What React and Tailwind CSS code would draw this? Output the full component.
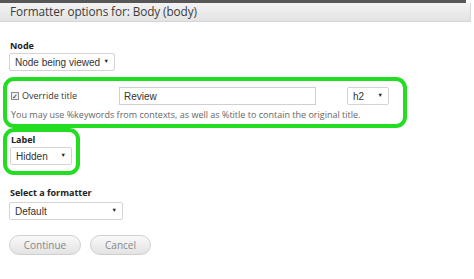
import React from "react";

const Caret = () => <span className="text-[5.5px] leading-none text-[#222]">▼</span>;

const FakeSelect = ({ value, className = "" }) => (
  <div
    className={`flex items-center justify-between h-[18px] pl-[5px] pr-[5px] bg-white border border-[#d4d4d4] rounded-[2px] text-[10px] text-[#333] whitespace-nowrap font-['Liberation_Sans',Arial,sans-serif] ${className}`}
  >
    <span>{value}</span>
    <Caret />
  </div>
);

const App = () => {
  return (
    <div className="w-[474px] h-[279px] bg-white overflow-hidden font-['Open_Sans',sans-serif] text-[#222] whitespace-nowrap">
      {/* Dialog header */}
      <div className="w-[466px] h-[3px] bg-[#575757]" />
      <div className="w-[471px] h-[19px] flex items-center pl-[10px] bg-gradient-to-b from-[#f3f3f3] to-[#e3e3e3] border-b border-[#d6d6d6] border-r border-r-[#d8d8d8]">
        <h3 className="text-[11.8px] text-[#3c3c3c] tracking-[-0.1px]">Formatter options for: Body (body)</h3>
      </div>

      <div className="pt-[18px]">
        {/* Node */}
        <div className="pl-[9px]">
          <div className="pl-[1px] text-[9px] font-bold leading-[12px]">Node</div>
          <FakeSelect value="Node being viewed" className="w-[106px] mt-[1px]" />
        </div>

        {/* Override title */}
        <div className="ml-[3px] mt-[6px] w-[404px] h-[51px] border-[4px] border-[#22dd22] rounded-[11px] pl-[4px] pt-[6px]">
          <div className="flex items-center h-[18px]">
            <span className="w-[8px] h-[8px] border border-[#8a8a8a] bg-[#f0f0f0] flex items-center justify-center text-[7px] leading-none text-[#222]">✓</span>
            <span className="ml-[3px] w-[97px] text-[9px] text-[#333]">Override title</span>
            <div className="w-[197px] h-[18px] border border-[#d0d0d0] pl-[4px] flex items-center text-[10px] text-[#333] font-['Liberation_Sans',Arial,sans-serif]">
              Review
            </div>
            <FakeSelect value="h2" className="ml-[31px] w-[42px]" />
          </div>
          <p className="mt-[4px] text-[9px] text-[#666] leading-[12px]">
            You may use %keywords from contexts, as well as %title to contain the original title.
          </p>
        </div>

        {/* Label */}
        <div className="ml-[3px] w-[77px] h-[47px] border-[4px] border-[#22dd22] rounded-[11px] pl-[3px] pt-[2px]">
          <div className="pl-[1px] text-[9px] font-bold leading-[12px]">Label</div>
          <FakeSelect value="Hidden" className="w-[62px] mt-[1px]" />
        </div>

        {/* Formatter */}
        <div className="pl-[9px] mt-[12px]">
          <div className="pl-[1px] text-[9px] font-bold leading-[12px]">Select a formatter</div>
          <FakeSelect value="Default" className="w-[114px] mt-[3px]" />
        </div>

        {/* Buttons */}
        <div className="flex gap-[9px] pl-[9px] mt-[15px]">
          <button className="w-[72px] h-[20px] rounded-full border border-[#cfcfcf] bg-gradient-to-b from-[#f9f9f9] to-[#e3e3e3] text-[10px] text-[#888]">
            Continue
          </button>
          <button className="w-[61px] h-[20px] rounded-full border border-[#cfcfcf] bg-gradient-to-b from-[#f9f9f9] to-[#e3e3e3] text-[10px] text-[#888]">
            Cancel
          </button>
        </div>
      </div>
    </div>
  );
};

export default App;
